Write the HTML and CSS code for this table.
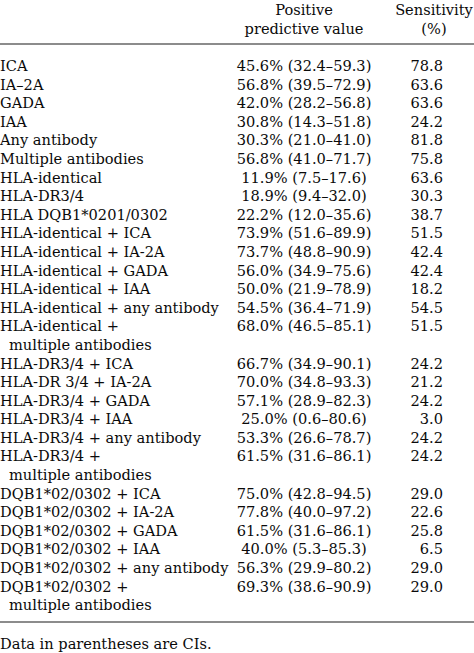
FILE: index.html
```html
<!DOCTYPE html>
<html>
<head>
<meta charset="utf-8">
<link rel="stylesheet" href="styles.css">
</head>
<body>
<table class="tbl">
<thead>
<tr class="head">
<th class="c1"></th>
<th class="c2">Positive<br>predictive value</th>
<th class="c3">Sensitivity<br>(%)</th>
</tr>
</thead>
<tbody>
<tr class="first"><td class="c1">ICA</td><td class="c2">45.6% (32.4–59.3)</td><td class="c3">78.8</td></tr>
<tr><td class="c1">IA–2A</td><td class="c2">56.8% (39.5–72.9)</td><td class="c3">63.6</td></tr>
<tr><td class="c1">GADA</td><td class="c2">42.0% (28.2–56.8)</td><td class="c3">63.6</td></tr>
<tr><td class="c1">IAA</td><td class="c2">30.8% (14.3–51.8)</td><td class="c3">24.2</td></tr>
<tr><td class="c1">Any antibody</td><td class="c2">30.3% (21.0–41.0)</td><td class="c3">81.8</td></tr>
<tr><td class="c1">Multiple antibodies</td><td class="c2">56.8% (41.0–71.7)</td><td class="c3">75.8</td></tr>
<tr><td class="c1">HLA-identical</td><td class="c2">11.9% (7.5–17.6)</td><td class="c3">63.6</td></tr>
<tr><td class="c1">HLA-DR3/4</td><td class="c2">18.9% (9.4–32.0)</td><td class="c3">30.3</td></tr>
<tr><td class="c1">HLA DQB1*0201/0302</td><td class="c2">22.2% (12.0–35.6)</td><td class="c3">38.7</td></tr>
<tr><td class="c1">HLA-identical + ICA</td><td class="c2">73.9% (51.6–89.9)</td><td class="c3">51.5</td></tr>
<tr><td class="c1">HLA-identical + IA-2A</td><td class="c2">73.7% (48.8–90.9)</td><td class="c3">42.4</td></tr>
<tr><td class="c1">HLA-identical + GADA</td><td class="c2">56.0% (34.9–75.6)</td><td class="c3">42.4</td></tr>
<tr><td class="c1">HLA-identical + IAA</td><td class="c2">50.0% (21.9–78.9)</td><td class="c3">18.2</td></tr>
<tr><td class="c1">HLA-identical + any antibody</td><td class="c2">54.5% (36.4–71.9)</td><td class="c3">54.5</td></tr>
<tr><td class="c1">HLA-identical +<br>multiple antibodies</td><td class="c2">68.0% (46.5–85.1)</td><td class="c3">51.5</td></tr>
<tr><td class="c1">HLA-DR3/4 + ICA</td><td class="c2">66.7% (34.9–90.1)</td><td class="c3">24.2</td></tr>
<tr><td class="c1">HLA-DR 3/4 + IA-2A</td><td class="c2">70.0% (34.8–93.3)</td><td class="c3">21.2</td></tr>
<tr><td class="c1">HLA-DR3/4 + GADA</td><td class="c2">57.1% (28.9–82.3)</td><td class="c3">24.2</td></tr>
<tr><td class="c1">HLA-DR3/4 + IAA</td><td class="c2">25.0% (0.6–80.6)</td><td class="c3">3.0</td></tr>
<tr><td class="c1">HLA-DR3/4 + any antibody</td><td class="c2">53.3% (26.6–78.7)</td><td class="c3">24.2</td></tr>
<tr><td class="c1">HLA-DR3/4 +<br>multiple antibodies</td><td class="c2">61.5% (31.6–86.1)</td><td class="c3">24.2</td></tr>
<tr><td class="c1">DQB1*02/0302 + ICA</td><td class="c2">75.0% (42.8–94.5)</td><td class="c3">29.0</td></tr>
<tr><td class="c1">DQB1*02/0302 + IA-2A</td><td class="c2">77.8% (40.0–97.2)</td><td class="c3">22.6</td></tr>
<tr><td class="c1">DQB1*02/0302 + GADA</td><td class="c2">61.5% (31.6–86.1)</td><td class="c3">25.8</td></tr>
<tr><td class="c1">DQB1*02/0302 + IAA</td><td class="c2">40.0% (5.3–85.3)</td><td class="c3">6.5</td></tr>
<tr><td class="c1">DQB1*02/0302 + any antibody</td><td class="c2">56.3% (29.9–80.2)</td><td class="c3">29.0</td></tr>
<tr class="last"><td class="c1">DQB1*02/0302 +<br>multiple antibodies</td><td class="c2">69.3% (38.6–90.9)</td><td class="c3">29.0</td></tr>
</tbody>
</table>
<p class="note">Data in parentheses are CIs.</p>
</body>
</html>
```
FILE: styles.css
```css
html, body {
  margin: 0;
  padding: 0;
  background: #ffffff;
}
body {
  width: 474px;
  font-family: "DejaVu Serif", serif;
  font-size: 14.6px;
  color: #0a0a0a;
}
.tbl {
  width: 474px;
  border-collapse: collapse;
  table-layout: fixed;
}
.tbl th, .tbl td {
  padding: 0;
  font-weight: normal;
  line-height: 18.6px;
  vertical-align: top;
  white-space: nowrap;
}
.c1 {
  width: 226px;
  text-align: left;
  padding-left: 9px !important;
  text-indent: -9px;
}
.c2 {
  width: 138px;
  text-align: center;
}
.c3 {
  text-align: right;
  padding-right: 31px !important;
}
.head th {
  line-height: 19px;
  padding-bottom: 5px;
  border-bottom: 2px solid #8c8c8c;
}
.head th.c3 {
  text-align: center;
  padding-right: 0 !important;
  padding-left: 21px;
}
.first td {
  padding-top: 12px;
}
.last td {
  padding-bottom: 6px;
  border-bottom: 2px solid #8c8c8c;
}
.note {
  margin: 12px 0 0 0;
  line-height: 17px;
}
```
